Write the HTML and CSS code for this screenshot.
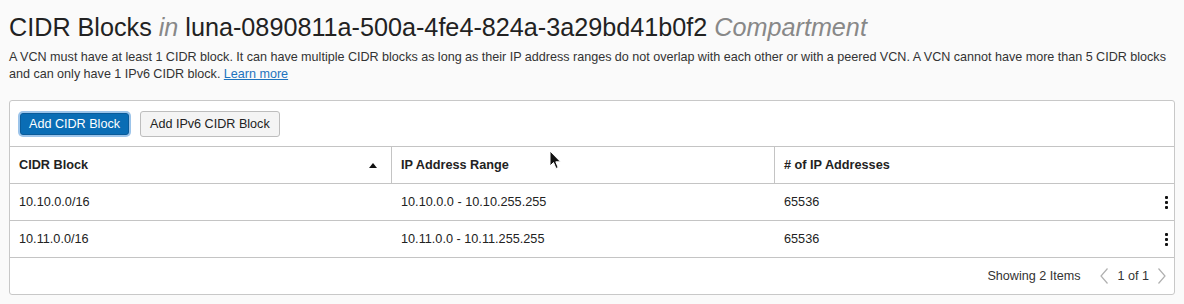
FILE: index.html
```html
<!DOCTYPE html>
<html>
<head>
<meta charset="utf-8">
<link rel="stylesheet" href="styles.css">
</head>
<body>
<div class="page">
  <h1 class="title">CIDR Blocks <em>in</em> luna-0890811a-500a-4fe4-824a-3a29bd41b0f2 <em>Compartment</em></h1>
  <p class="desc">A VCN must have at least 1 CIDR block. It can have multiple CIDR blocks as long as their IP address ranges do not overlap with each other or with a peered VCN. A VCN cannot have more than 5 CIDR blocks and can only have 1 IPv6 CIDR block. <a href="#">Learn more</a></p>
  <div class="panel">
    <div class="toolbar">
      <button class="btn btn-primary">Add CIDR Block</button>
      <button class="btn">Add IPv6 CIDR Block</button>
    </div>
    <div class="grid head">
      <div class="cell">CIDR Block <span class="sort"></span></div>
      <div class="cell">IP Address Range</div>
      <div class="cell">
        # of IP Addresses
      </div>
    </div>
    <div class="grid row">
      <div class="cell">10.10.0.0/16</div>
      <div class="cell">10.10.0.0 - 10.10.255.255</div>
      <div class="cell">65536 <span class="kebab"><i></i><i></i><i></i></span></div>
    </div>
    <div class="grid row">
      <div class="cell">10.11.0.0/16</div>
      <div class="cell">10.11.0.0 - 10.11.255.255</div>
      <div class="cell">65536 <span class="kebab"><i></i><i></i><i></i></span></div>
    </div>
    <div class="footer">
      <span class="showing">Showing 2 Items</span>
      <span class="pager">
        <svg width="10" height="18" viewBox="0 0 10 18"><path d="M8.5 1.5 L2 9 L8.5 16.5" fill="none" stroke="#b0b0b0" stroke-width="1.2"/></svg>
        <span>1 of 1</span>
        <svg width="10" height="18" viewBox="0 0 10 18"><path d="M1.5 1.5 L8 9 L1.5 16.5" fill="none" stroke="#b0b0b0" stroke-width="1.2"/></svg>
      </span>
    </div>
  </div>
</div>
<svg class="cursor" width="13" height="20" viewBox="0 0 13 20"><path d="M1 1 L1 16 L4.5 12.5 L7 18.5 L9.2 17.5 L6.8 11.8 L11.5 11.8 Z" fill="#111" stroke="#fff" stroke-width="1"/></svg>
</body>
</html>
```
FILE: styles.css
```css
html, body {
  margin: 0;
  padding: 0;
  background: #fafafa;
  font-family: "Liberation Sans", Arial, sans-serif;
  color: #333;
}
.page {
  padding: 12px 9px 0 9px;
  position: relative;
}
.title {
  margin: 0;
  font-weight: normal;
  font-size: 25.2px;
  line-height: 30px;
  color: #222;
}
.title em {
  color: #888;
  font-style: italic;
}
.desc {
  margin: 7px 0 0 0;
  font-size: 12.6px;
  word-spacing: -0.1px;
  line-height: 17px;
  color: #333;
}
.desc a {
  color: #1e73be;
  text-decoration: underline;
}
.panel {
  margin-top: 17px;
  width: 1164px;
  border: 1px solid #c8c8c8;
  border-radius: 3px;
  background: #fff;
}
.toolbar {
  display: flex;
  gap: 9px;
  padding: 9px 8px 9px 8px;
  height: 27px;
  align-items: center;
  border-bottom: 1px solid #c4c4c4;
}
.btn {
  font-family: "Liberation Sans", Arial, sans-serif;
  font-size: 12.6px;
  height: 26px;
  padding: 0 9px;
  border: 1px solid #bdbdbd;
  border-radius: 3px;
  background: #f4f4f4;
  color: #222;
  cursor: pointer;
}
.btn-primary {
  background: #0a6db5;
  border-color: #0a5b99;
  color: #fff;
  height: 22px;
  margin: 0 2px;
  padding: 0 8px;
  box-shadow: 0 0 0 2px #9cc4ea;
}
.grid {
  display: grid;
  grid-template-columns: 381px 383px 1fr;
  border-bottom: 1px solid #c4c4c4;
  font-size: 12.7px;
}
.grid .cell {
  height: 36px;
  display: flex;
  align-items: center;
  padding: 0 9px;
  color: #222;
}
.head .cell {
  font-weight: bold;
  color: #222;
}
.head .cell + .cell {
  border-left: 1px solid #c4c4c4;
}
.row .cell + .cell {
  padding-left: 10px;
}
.sort {
  margin-left: auto;
  margin-right: 5px;
  width: 0;
  height: 0;
  border-left: 4px solid transparent;
  border-right: 4px solid transparent;
  border-bottom: 5px solid #111;
}
.kebab {
  margin-left: auto;
  display: flex;
  flex-direction: column;
  gap: 2px;
  margin-right: -3px;
}
.kebab i {
  display: block;
  width: 3px;
  height: 3px;
  background: #111;
  border-radius: 1px;
}
.footer {
  height: 36px;
  display: flex;
  align-items: center;
  justify-content: flex-end;
  font-size: 12.6px;
  color: #333;
  padding-right: 7px;
}
.pager {
  display: flex;
  align-items: center;
  gap: 8px;
  margin-left: 19px;
}
.cursor {
  position: absolute;
  left: 549px;
  top: 150px;
}
```
